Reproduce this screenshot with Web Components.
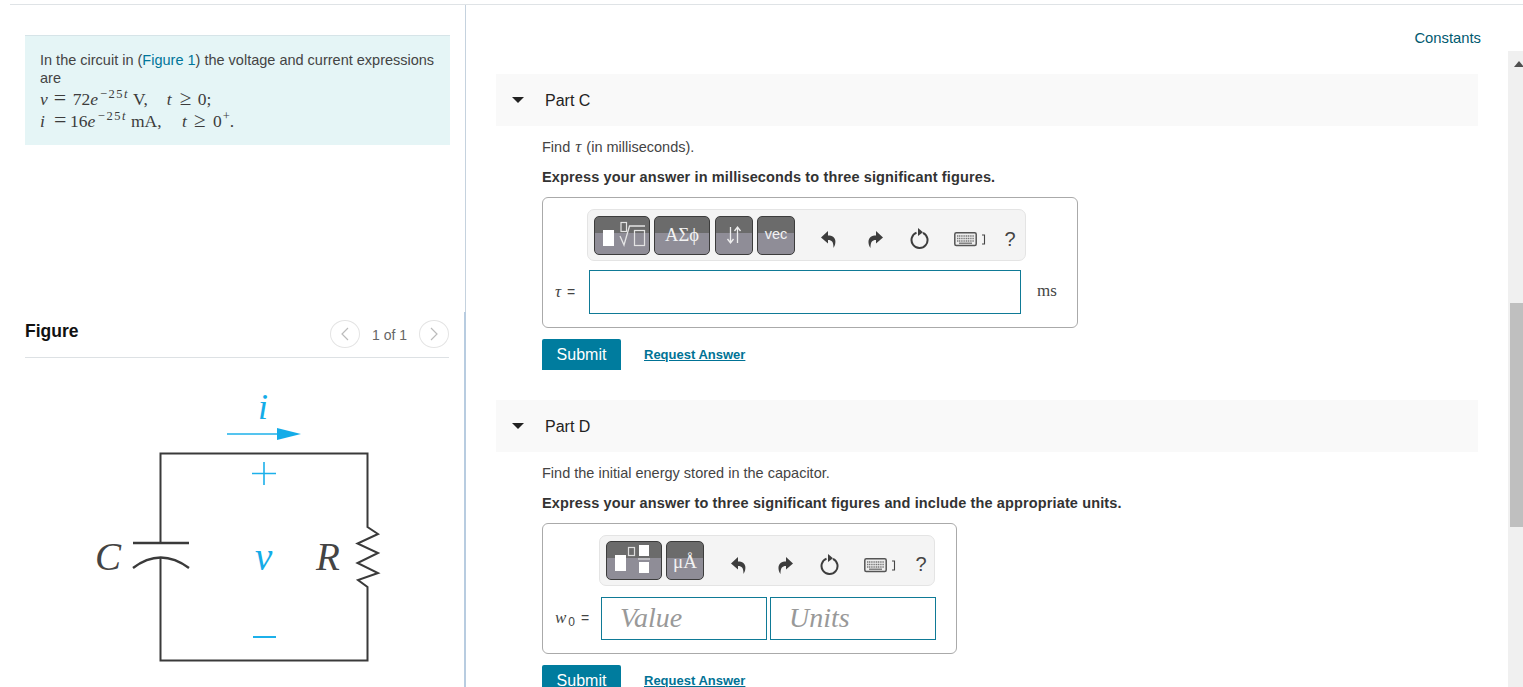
<!DOCTYPE html>
<html>
<head>
<meta charset="utf-8">
<title>Part C and D</title>
<style>
  html, body { margin: 0; height: 687px; overflow: hidden; background: #fff; }
  body { font-family: "Liberation Sans", Arial, sans-serif; color: #333; }
  i.m { font-family: "Liberation Serif", serif; font-size: 17px; margin: 0 1px; }
</style>
</head>
<body>
<mp-app>
  <mp-problem slot="left"></mp-problem>
  <mp-figure slot="left"></mp-figure>
  <mp-part slot="right" title="Part C">
    <span slot="prompt">Find <i class="m">τ</i> (in milliseconds).</span>
    <span slot="hint">Express your answer in milliseconds to three significant figures.</span>
    <answer-box slot="answer" kind="c"></answer-box>
  </mp-part>
  <mp-part slot="right" title="Part D">
    <span slot="prompt">Find the initial energy stored in the capacitor.</span>
    <span slot="hint">Express your answer to three significant figures and include the appropriate units.</span>
    <answer-box slot="answer" kind="d"></answer-box>
  </mp-part>
</mp-app>

<script>
class MpApp extends HTMLElement {
  constructor() {
    super();
    this.attachShadow({ mode: "open" }).innerHTML = `
      <style>
        :host { display: block; height: 687px; overflow: hidden; padding-top: 4px; box-sizing: border-box; }
        .rule { height: 1px; background: #dfe3e6; margin-left: 10px; }
        .panes { display: grid; grid-template-columns: 466px 1fr; height: 682px; }
        .left { box-sizing: border-box; position: relative; overflow: hidden; padding: 30px 16px 0 25px; }
        .left::before { content: ""; position: absolute; right: 0; top: 0; height: 307px; width: 1px; background: #c5d2de; }
        .left::after { content: ""; position: absolute; right: 0; top: 307px; bottom: 0; width: 2px; background: #b8cce0; }
        .right { display: grid; grid-template-rows: 46px 1fr; min-width: 0; }
        .top { display: flex; justify-content: flex-end; align-items: center; height: 46px; padding-right: 42px; padding-top: 20px; box-sizing: border-box; }
        .top a { color: #00596f; font-size: 14.8px; line-height: 16px; text-decoration: none; }
        .scroll { display: grid; grid-template-columns: 1fr 15px; min-height: 0; overflow: hidden; }
        .content { padding: 23px 30px 0 30px; overflow: hidden; min-width: 0; }
        ::slotted(mp-part) { margin-bottom: 30px; }
      </style>
      <div class="rule"></div>
      <div class="panes">
        <div class="left"><slot name="left"></slot></div>
        <div class="right">
          <div class="top"><a href="#">Constants</a></div>
          <div class="scroll">
            <div class="content"><slot name="right"></slot></div>
            <fake-scrollbar></fake-scrollbar>
          </div>
        </div>
      </div>`;
  }
}

class FakeScrollbar extends HTMLElement {
  constructor() {
    super();
    this.attachShadow({ mode: "open" }).innerHTML = `
      <style>
        :host { display: flex; flex-direction: column; background: #f0f0f0; height: 100%; }
        .arrow { height: 17px; flex: none; display: flex; justify-content: flex-end; }
        .up { height: 20px; padding-top: 10px; box-sizing: border-box; margin-bottom: 232px; }
        .down { align-items: flex-end; }
        .thumb { height: 224px; background: #bfbfbf; margin-left: 2px; flex: none; }
        .spacer { flex: 1; }
        svg { display: block; }
      </style>
      <div class="arrow up"><svg width="9" height="6"><path d="M5 0 L10 6 L0 6 Z" fill="#505050"/></svg></div>
      <div class="thumb"></div>
      <div class="spacer"></div>
      <div class="arrow down"><svg width="9" height="6"><path d="M0 0 L10 0 L5 6 Z" fill="#505050"/></svg></div>`;
  }
}

class MpProblem extends HTMLElement {
  constructor() {
    super();
    this.attachShadow({ mode: "open" }).innerHTML = `
      <style>
        :host { display: block; background: #e5f5f6; border-top: 1px solid #d6e4e8; height: 110px; box-sizing: border-box; padding: 15px 15px 0 15px; font-size: 14.5px; line-height: 18px; color: #444; }
        a { color: #00759a; text-decoration: none; }
        .eq { font-family: "Liberation Serif", serif; font-size: 17.5px; line-height: 22px; white-space: nowrap; color: #3c3c3c; }
        sup { font-size: 12.5px; line-height: 0; vertical-align: 7.5px; letter-spacing: 1.5px; margin-left: 2px; }
        .op { font-size: 22px; line-height: 0; }
        .ge { font-size: 21px; line-height: 0; }
      </style>
      <div>In the circuit in (<a href="#">Figure 1</a>) the voltage and current expressions<br>are</div>
      <div class="eq" style="margin-top:1px"><i>v</i><span class="op" style="margin:0 6.5px 0 6px">=</span>72<i>e</i><sup>−25<i>t</i></sup><span style="margin-left:4px">V,</span><i style="margin-left:19px">t</i><span class="ge" style="margin:0 6.5px 0 8px">≥</span>0;</div>
      <div class="eq"><i>i</i><span class="op" style="margin:0 3.6px 0 9px">=</span>16<i>e</i><sup style="margin-left:2.7px">−25<i>t</i></sup><span style="margin-left:4px">mA,</span><i style="margin-left:20.5px">t</i><span class="ge" style="margin:0 7.5px 0 7px">≥</span>0<sup style="margin-left:1px;letter-spacing:0">+</sup>.</div>`;
  }
}

class MpFigure extends HTMLElement {
  constructor() {
    super();
    this.attachShadow({ mode: "open" }).innerHTML = `
      <style>
        :host { display: block; margin-top: 167px; }
        .head { display: flex; align-items: center; height: 46px; box-sizing: border-box; border-bottom: 1px solid #dde1e4; width: 424px; padding-bottom: 1px; }
        h2 { margin: 0; font-size: 17.5px; font-weight: 700; color: #111; flex: 1; position: relative; top: -3px; }
        .nav { display: flex; align-items: center; gap: 12px; font-size: 14px; color: #666; }
        .nav .t { position: relative; top: 1px; }
        .nav span.c { width: 28px; height: 26px; border: 1px solid #e4e4e4; border-radius: 50%; display: flex; align-items: center; justify-content: center; }
        svg { display: block; }
      </style>
      <div class="head">
        <h2>Figure</h2>
        <div class="nav">
          <span class="c"><svg width="10" height="14"><path d="M8 1 L2 7 L8 13" fill="none" stroke="#bbb" stroke-width="1.2"/></svg></span>
          <span class="t">1 of 1</span>
          <span class="c"><svg width="10" height="14"><path d="M2 1 L8 7 L2 13" fill="none" stroke="#bbb" stroke-width="1.2"/></svg></span>
        </div>
      </div>
      <svg width="425" height="330" viewBox="25 358 425 330">
        <g fill="none" stroke="#3a3a3a" stroke-width="2">
          <path d="M160.5 543 V453.5 H367.5 V527 L378 534 L357.5 543.5 L378 553 L357.5 563 L378 573 L358 580 L367.5 587 V660.5 H160.5 V558"/>
          <path d="M133 543 H189" stroke-width="2.4"/>
          <path d="M133 568 Q160.5 547 189 568" stroke-width="2.4"/>
        </g>
        <g font-family="Liberation Serif, serif" font-style="italic" font-size="39">
          <text x="95" y="570" fill="#444">C</text>
          <text x="316" y="570" fill="#444">R</text>
          <text x="255" y="570" fill="#14ace8">v</text>
          <text x="258" y="419" fill="#14ace8" font-size="36">i</text>
        </g>
        <g stroke="#1cb0ea" fill="none" stroke-width="1.6">
          <path d="M227 434 H280"/>
          <path d="M252 473.5 H276 M264 462 V485"/>
          <path d="M253 637 H276" stroke-width="2"/>
        </g>
        <path d="M277 428 L301 434 L277 440 Z" fill="#14ace8"/>
      </svg>`;
  }
}

class MpPart extends HTMLElement {
  constructor() {
    super();
    const root = this.attachShadow({ mode: "open" });
    root.innerHTML = `
      <style>
        :host { display: block; }
        .bar { display: flex; align-items: center; height: 52px; background: #f9f9f9; }
        .tri { margin-left: 16px; width: 0; height: 0; border: 6px solid transparent; border-top: 6px solid #222; border-bottom: 0; margin-right: 21px; }
        .name { font-size: 16px; color: #222; padding-top: 2px; }
        .body { padding: 12px 0 0 46px; }
        .p { font-size: 14.5px; line-height: 18px; color: #444; margin-bottom: 12px; }
        .b { font-size: 14.5px; line-height: 18px; font-weight: 700; color: #333; margin-bottom: 11px; letter-spacing: .13px; }
        .row { display: flex; align-items: center; gap: 23px; margin-top: 11px; height: 31px; }
        .sub { display: block; width: 79px; height: 31px; background: #007c9e; color: #fff; font-size: 16px; line-height: 32px; text-align: center; border-radius: 2px 2px 0 0; }
        a { color: #007295; font-size: 13px; font-weight: 700; text-decoration: underline; }
      </style>
      <div class="bar"><span class="tri"></span><span class="name"></span></div>
      <div class="body">
        <div class="p"><slot name="prompt"></slot></div>
        <div class="b"><slot name="hint"></slot></div>
        <slot name="answer"></slot>
        <div class="row"><span class="sub">Submit</span><a href="#">Request Answer</a></div>
      </div>`;
    root.querySelector(".name").textContent = this.getAttribute("title");
    this.removeAttribute("title");
  }
}

class ToolBtn extends HTMLElement {
  constructor() {
    super();
    this.attachShadow({ mode: "open" }).innerHTML = `
      <style>
        :host { display: flex; align-items: center; justify-content: center; height: 39px; box-sizing: border-box; border: 1px solid #3c3c3c; border-bottom-width: 1.5px; border-radius: 5px; background: linear-gradient(#6b6b6b 0, #6b6b6b 44%, #8f8d97 44%, #8f8d97 100%); color: #f2f2f2; overflow: hidden; }
      </style>
      <slot></slot>`;
  }
}

const undoIcon = `<svg width="18" height="20" viewBox="0 0 18 20"><path d="M8 2 L1 8.5 L8 14.5 V11 C12 11 13.5 13 13.5 19 C16.5 14.5 17 6.5 8 6.5 Z" fill="#3d3d3d"/></svg>`;
const redoIcon = `<svg width="18" height="20" viewBox="0 0 18 20"><path d="M10 2 L17 8.5 L10 14.5 V11 C6 11 4.5 13 4.5 19 C1.5 14.5 1 6.5 10 6.5 Z" fill="#3d3d3d"/></svg>`;
const resetIcon = `<svg width="20" height="24" viewBox="0 0 20 24"><path d="M13 5.8 A8 8 0 1 1 6.5 5.6" fill="none" stroke="#3d3d3d" stroke-width="2"/><path d="M8 1 L13 5.2 L8 9 Z" fill="#3d3d3d"/></svg>`;
const kbIcon = `<svg width="32" height="16" viewBox="0 0 32 16"><rect x="0.8" y="1.8" width="21.4" height="12.6" rx="1.5" fill="#eee" stroke="#555" stroke-width="1.5"/><path d="M3 5 H20 M3 7.5 H20 M3 10 H20" stroke="#777" stroke-width="1.4" stroke-dasharray="1.2 .6"/><path d="M5 12.2 H18" stroke="#666" stroke-width="1.2"/><path d="M28 4 H30.5 V13 H28" fill="none" stroke="#444" stroke-width="1.1"/></svg>`;

const tplBtn1 = `<tool-btn style="width:56px"><svg width="54" height="37" viewBox="0 0 54 37"><rect x="8" y="13" width="11" height="16" fill="#fff"/><rect x="26" y="5.5" width="5.5" height="9" fill="none" stroke="#e4e4e4" stroke-width="1.2"/><path d="M25 19 L29 28 L34.5 9 H50" fill="none" stroke="#e4e4e4" stroke-width="1.3"/><rect x="39.5" y="13.5" width="10" height="15" fill="none" stroke="#e4e4e4" stroke-width="1.2"/></svg></tool-btn>`;
const tplBtn2 = `<tool-btn style="width:56px;font:18.5px 'Liberation Serif',serif">ΑΣϕ</tool-btn>`;
const tplBtn3 = `<tool-btn style="width:38px;margin-left:1px"><svg width="20" height="22" viewBox="0 0 20 22"><path d="M6.5 3 V18 M3.5 15 L6.5 19 L9.5 15 M13.5 19 V4 M10.5 7 L13.5 3 L16.5 7" fill="none" stroke="#eee" stroke-width="1.3"/></svg></tool-btn>`;
const tplBtn4 = `<tool-btn style="width:38px;font:14.5px 'Liberation Sans',sans-serif;align-items:flex-start;padding-top:9px">vec</tool-btn>`;
const tplBtn5 = `<tool-btn style="width:56px"><svg width="54" height="37" viewBox="0 0 54 37"><rect x="8" y="13" width="11" height="16" fill="#fff"/><rect x="21.5" y="5.5" width="6" height="8" fill="none" stroke="#ddd" stroke-width="1.2"/><rect x="32" y="3" width="10" height="11" fill="#fff"/><path d="M31 17 H43" stroke="#eee" stroke-width="1.2"/><rect x="32" y="20" width="10" height="11" fill="#fff"/></svg></tool-btn>`;
const tplBtn6 = `<tool-btn style="width:38px;font:19px 'Liberation Serif',serif;padding-top:3px">μÅ</tool-btn>`;

class MathToolbar extends HTMLElement {
  constructor() {
    super();
    const isC = this.getAttribute("kind") === "c";
    const btns = isC ? tplBtn1 + tplBtn2 + tplBtn3 + tplBtn4 : tplBtn5 + tplBtn6;
    this.attachShadow({ mode: "open" }).innerHTML = `
      <style>
        :host { display: flex; align-items: center; height: ${isC ? 52 : 51}px; box-sizing: border-box; background: #f4f4f4; border: 1px solid #e4e4e4; border-radius: 7px; padding: 0 6px; }
        .btns { display: flex; gap: 4px; }
        .tools { display: flex; align-items: center; margin-left: ${isC ? 10 : 11}px; margin-top: 8px; }
        .cell { width: 46px; display: flex; justify-content: center; align-items: center; height: 26px; flex: none; }
        .q { font-size: 20px; color: #444; }
      </style>
      <div class="btns">${btns}</div>
      <div class="tools">
        <span class="cell" style="width:47px">${undoIcon}</span>
        <span class="cell" style="width:45px">${redoIcon}</span>
        <span class="cell" style="width:45px">${resetIcon}</span>
        <span class="cell" style="width:55px">${kbIcon}</span>
        <span class="cell q" style="width:${isC ? 26 : 28}px">?</span>
      </div>`;
  }
}

class AnswerBox extends HTMLElement {
  constructor() {
    super();
    const kind = this.getAttribute("kind");
    const isC = kind === "c";
    const field = isC
      ? `<span class="lab" style="width:46px"><i>τ</i> =</span><span class="inp" style="width:432px"></span><span class="unit">ms</span>`
      : `<span class="lab" style="width:58px"><i>w</i><sub>0</sub> =</span><span class="inp ph" style="width:166px">Value</span><span class="inp ph" style="width:166px;margin-left:3px">Units</span>`;
    this.attachShadow({ mode: "open" }).innerHTML = `
      <style>
        :host { display: block; box-sizing: border-box; height: 131px; border: 1px solid #aaa; border-radius: 6px; padding: 11px 0 0 ${isC ? 44 : 56}px; width: ${isC ? 536 : 415}px; }
        .f { display: flex; align-items: center; margin-top: ${isC ? 9 : 11}px; margin-left: ${isC ? -44 : -56}px; }
        .lab { box-sizing: border-box; padding-left: 12px; font-size: 14px; color: #444; white-space: nowrap; }
        .lab i { font-family: "Liberation Serif", serif; font-size: 17px; margin-right: 2px; }
        sub { font-size: 12px; margin-right: 2px; }
        .inp { display: block; box-sizing: border-box; height: ${isC ? 44 : 43}px; border: 1px solid #0f7a96; background: #fff; }
        .ph { font: italic 28px/39px "Liberation Serif", serif; color: #999; padding-left: 18px; }
        .unit { font: 17px "Liberation Serif", serif; color: #444; margin-left: 16px; position: relative; top: -1px; }
        math-toolbar { width: ${isC ? 439 : 336}px; }
      </style>
      <math-toolbar kind="${kind}"></math-toolbar>
      <div class="f">${field}</div>`;
  }
}

customElements.define("tool-btn", ToolBtn);
customElements.define("math-toolbar", MathToolbar);
customElements.define("answer-box", AnswerBox);
customElements.define("mp-part", MpPart);
customElements.define("mp-figure", MpFigure);
customElements.define("mp-problem", MpProblem);
customElements.define("fake-scrollbar", FakeScrollbar);
customElements.define("mp-app", MpApp);
</script>
</body>
</html>
